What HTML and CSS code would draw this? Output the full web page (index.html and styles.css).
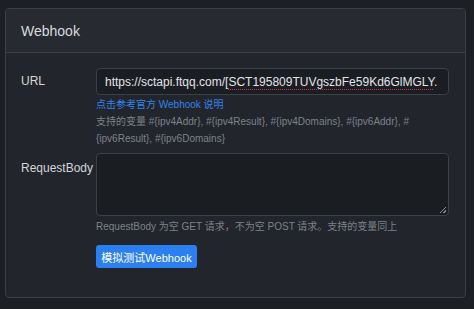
FILE: index.html
```html
<!DOCTYPE html>
<html lang="zh-CN">
<head>
  <meta charset="UTF-8">
  <meta name="viewport" content="width=device-width, initial-scale=1.0">
  <title>Webhook</title>
  <link rel="stylesheet" href="styles.css">
</head>
<body>

<!-- Webhook settings card -->
<div class="card">
  <div class="card-header">Webhook</div>
  <div class="card-body">

    <div class="row">
      <label class="label">URL</label>
      <div class="field">
        <div class="input"><span>https://sctapi.ftqq.com/[</span><span class="typo">SCT195809TUVgszbFe59Kd6GlMGLY</span><span>.</span></div>
        <a class="link" href="#">点击参考官方 Webhook 说明</a>
        <div class="help">支持的变量 #{ipv4Addr}, #{ipv4Result}, #{ipv4Domains}, #{ipv6Addr}, #{ipv6Result}, #{ipv6Domains}</div>
      </div>
    </div>

    <div class="row">
      <label class="label label-area">RequestBody</label>
      <div class="field">
        <div class="textarea"><span class="grip"></span></div>
        <div class="help help-area">RequestBody 为空 GET 请求，不为空 POST 请求。支持的变量同上</div>
      </div>
    </div>

    <div class="row">
      <div class="label"></div>
      <div class="field">
        <button class="btn">模拟测试Webhook</button>
      </div>
    </div>

  </div>
</div>

</body>
</html>
```

FILE: styles.css
```css
body {
  margin: 0;
  padding: 8px 8px 0 5px;
  background-color: #1c1f24;
  color: #d4d6d9;
  font-family: "Liberation Sans", Arial, "Noto Sans CJK SC", sans-serif;
}
.card {
  border: 1px solid #3b4048;
  border-radius: 4px;
  background: #22252b;
  overflow: hidden;
}
.card-header {
  background: #272b31;
  border-bottom: 1px solid #3b4048;
  height: 43px;
  line-height: 44px;
  padding-left: 15px;
  font-size: 14px;
  color: #d8dade;
}
.card-body {
  padding: 15px 16px 29px 15px;
}
.row {
  display: flex;
  margin-bottom: 6px;
}
.row:last-child {
  margin-bottom: 0;
}
.label {
  width: 75px;
  flex-shrink: 0;
  font-size: 12px;
  line-height: 27px;
  color: #d4d6d9;
}
.label-area {
  line-height: 30px;
}
.field {
  flex: 1;
  min-width: 0;
}
.input {
  height: 25px;
  line-height: 26px;
  border: 1px solid #3c4047;
  border-radius: 4px;
  background: #1a1d22;
  padding: 0 8px;
  font-size: 12px;
  color: #e2e4e7;
  white-space: nowrap;
  overflow: hidden;
}
.typo {
  text-decoration: underline dotted #c0394b;
  text-decoration-thickness: 1px;
  text-underline-offset: 3px;
}
.link {
  display: block;
  margin-top: 1px;
  font-size: 10px;
  line-height: 17px;
  color: #3383ec;
  text-decoration: none;
}
.help {
  font-size: 10px;
  line-height: 17px;
  color: #7d828a;
}
.help-area {
  margin-top: 2px;
}
.textarea {
  position: relative;
  height: 61px;
  border: 1px solid #3c4047;
  border-radius: 4px;
  background: #1a1d22;
}
/* resize handle */
.grip {
  position: absolute;
  right: 2px;
  bottom: 2px;
  width: 6px;
  height: 6px;
  background: linear-gradient(135deg, transparent 45%, #8a8f96 45%, #8a8f96 55%, transparent 55%, transparent 75%, #8a8f96 75%, #8a8f96 85%, transparent 85%);
}
.btn {
  margin-top: 4px;
  height: 23px;
  width: 101px;
  padding: 0;
  border: none;
  border-radius: 3px;
  background: #2b7ff0;
  color: #ffffff;
  font-family: "Liberation Sans", Arial, "Noto Sans CJK SC", sans-serif;
  font-size: 11px;
}
```
